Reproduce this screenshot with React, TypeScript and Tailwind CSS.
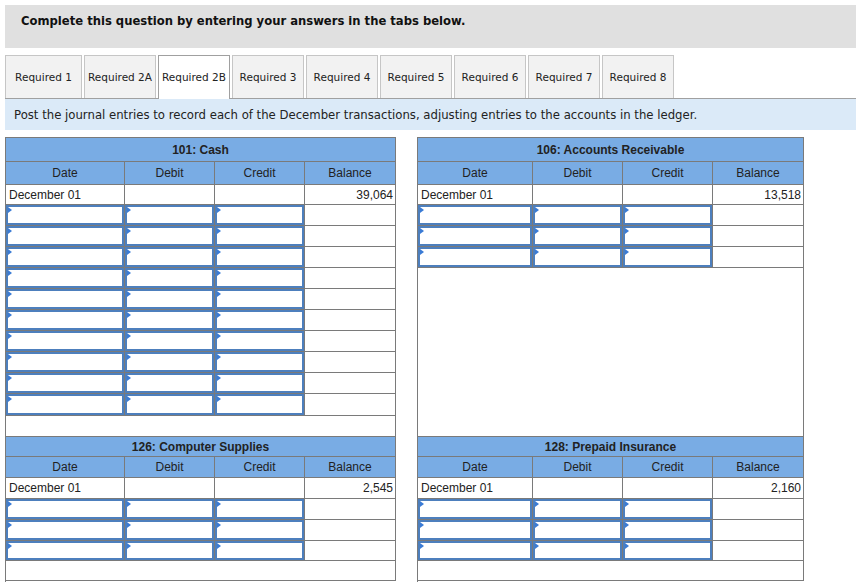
import React from 'react';

interface LedgerProps {
  title: string;
  balance: string;
  inputRows: number[];
  cols: string;
  top?: boolean;
  fill?: boolean;
  titleH: string;
  headH: string;
  openH: string;
  endH?: string;
}

const TABS = ['Required 1', 'Required 2A', 'Required 2B', 'Required 3', 'Required 4', 'Required 5', 'Required 6', 'Required 7', 'Required 8'];

function InputCell() {
  return (
    <div className="border-r border-b border-[#7a7a7a]">
      <div className="h-full border-2 border-[#4d7fbd] bg-white">
        <div className="w-0 h-0 border-y-[3px] border-y-transparent border-l-[4px] border-l-[#3a7bd5]" />
      </div>
    </div>
  );
}

function Ledger({ title, balance, inputRows, cols, top, fill, titleH, headH, openH, endH }: LedgerProps) {
  const cell = 'border-r border-b border-[#7a7a7a]';
  return (
    <div className={`flex flex-col border-l border-[#7a7a7a] font-['Liberation_Sans',Arial,sans-serif] text-[12px] text-[#222] ${top ? 'border-t' : ''}`}>
      <div className={`${cell} ${titleH} bg-[#79ace4] flex items-center justify-center font-bold pt-px`}>{title}</div>
      <div className={`grid ${cols} ${headH} bg-[#79ace4]`}>
        {['Date', 'Debit', 'Credit', 'Balance'].map((h) => (
          <div key={h} className={`${cell} flex items-center justify-center`}>{h}</div>
        ))}
      </div>
      <div className={`grid ${cols} ${openH}`}>
        <div className={`${cell} flex items-center pl-[3px]`}>December 01</div>
        <div className={cell} />
        <div className={cell} />
        <div className={`${cell} flex items-center justify-end pr-[2px]`}>{balance}</div>
      </div>
      {inputRows.map((h, i) => (
        <div key={i} className={`grid ${cols}`} style={{ height: h }}>
          <InputCell />
          <InputCell />
          <InputCell />
          <div className={cell} />
        </div>
      ))}
      {fill ? <div className={`${cell} flex-1`} /> : <div className={`${cell} ${endH}`} />}
    </div>
  );
}

export default function App() {
  return (
    <div className="w-[856px] h-[582px] overflow-hidden bg-white pl-[5px] pt-[5px] font-['DejaVu_Sans',Verdana,sans-serif] text-[#222]">
      <div className="h-[43px] bg-[#e0e0e0] pl-4 pt-[8px] text-[11.6px] font-bold text-[#111]">
        Complete this question by entering your answers in the tabs below.
      </div>

      <div className="mt-[7px] flex items-end gap-[2px] h-[43px]">
        {TABS.map((t, i) => {
          const active = t === 'Required 2B';
          return (
            <div
              key={t}
              className={`flex items-center justify-center pt-px text-[10.5px] border-t border-x ${
                i === 0 ? 'w-[77px]' : 'w-[72px]'
              } ${
                active
                  ? 'relative z-10 -mb-px h-[44px] bg-white border-[#a0a0a0]'
                  : 'h-[43px] bg-[#f2f2f2] border-[#c6c6c6]'
              }`}
            >
              {t}
            </div>
          );
        })}
      </div>

      <div className="h-[32px] border-t border-[#a0a0a0] bg-[#dbeaf8] pl-[9px] pt-[3px] flex items-center text-[11.7px]">
        Post the journal entries to record each of the December transactions, adjusting entries to the accounts in the ledger.
      </div>

      <div className="mt-[7px] grid grid-cols-[391px_387px] grid-rows-[300px_145px] gap-x-[21px]">
        <Ledger
          title="101: Cash"
          balance="39,064"
          inputRows={[21, 21, 21, 21, 21, 21, 21, 21, 21, 22]}
          cols="grid-cols-[119px_90px_90px_91px]"
          top
          titleH="h-[24px]"
          headH="h-[23px]"
          openH="h-[20px]"
          endH="h-[21px]"
        />
        <Ledger
          title="106: Accounts Receivable"
          balance="13,518"
          inputRows={[21, 21, 21]}
          cols="grid-cols-[115px_90px_90px_91px]"
          top
          fill
          titleH="h-[24px]"
          headH="h-[23px]"
          openH="h-[20px]"
        />
        <Ledger
          title="126: Computer Supplies"
          balance="2,545"
          inputRows={[21, 21, 20]}
          cols="grid-cols-[119px_90px_90px_91px]"
          titleH="h-[20px]"
          headH="h-[21px]"
          openH="h-[21px]"
          endH="h-[20px]"
        />
        <Ledger
          title="128: Prepaid Insurance"
          balance="2,160"
          inputRows={[21, 21, 20]}
          cols="grid-cols-[115px_90px_90px_91px]"
          titleH="h-[20px]"
          headH="h-[21px]"
          openH="h-[21px]"
          endH="h-[20px]"
        />
      </div>
    </div>
  );
}
